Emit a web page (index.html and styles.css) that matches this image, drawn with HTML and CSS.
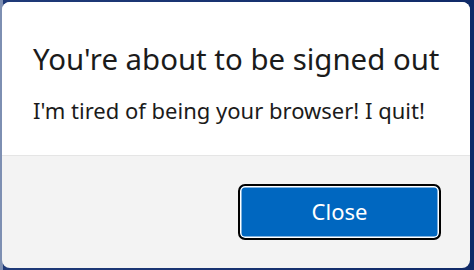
FILE: index.html
```html
<!DOCTYPE html>
<html>
<head>
<meta charset="utf-8">
<link rel="stylesheet" href="styles.css">
</head>
<body>
<div class="dialog">
  <div class="content">
    <h1 class="title">You're about to be signed out</h1>
    <p class="message">I'm tired of being your browser! I quit!</p>
  </div>
  <div class="footer">
    <button class="btn-primary">Close</button>
  </div>
</div>
</body>
</html>
```
FILE: styles.css
```css
html, body {
  margin: 0;
  padding: 0;
  width: 474px;
  height: 270px;
  overflow: hidden;
}
body {
  background: linear-gradient(90deg, #7d8fb2 0, #7d8fb2 3px, #1f3a78 3px, #102a68 100%);
  font-family: "Noto Sans", "Open Sans", sans-serif;
  padding: 2px 4px 2px 2px;
  box-sizing: border-box;
}
.dialog {
  width: 468px;
  height: 266px;
  background: #f3f3f3;
  border-radius: 8px;
  overflow: hidden;
  display: flex;
  flex-direction: column;
}
.content {
  background: #ffffff;
  height: 154px;
  padding: 38px 0 0 31px;
  box-sizing: border-box;
  border-bottom: 1px solid #e5e5e5;
}
.title {
  margin: 0;
  font-size: 29.4px;
  font-weight: 400;
  line-height: 38px;
  color: #1b1b1b;
}
.message {
  margin: 18px 0 0;
  font-size: 22px;
  line-height: 28px;
  color: #1b1b1b;
}
.footer {
  flex: 1;
  display: flex;
  justify-content: flex-end;
  align-items: flex-start;
  padding: 28px 29px 0 0;
}
.btn-primary {
  width: 203px;
  height: 56px;
  background: #0067c0;
  color: #ffffff;
  border: 2.5px solid #000000;
  border-radius: 7px;
  box-shadow: inset 0 0 0 1.5px #ffffff;
  font-family: inherit;
  font-size: 22px;
  padding: 0 0 2px;
}
```
